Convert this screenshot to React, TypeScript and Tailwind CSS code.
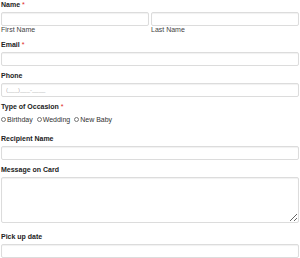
const inputCls =
  'block w-full h-[14px] border border-[#dcdcdc] rounded-[2px] bg-white shadow-[inset_0_1px_1px_rgba(0,0,0,0.06)] px-[4px] text-[6px] text-[#555] outline-none';

const Label = ({ text, required }: { text: string; required?: boolean }) => (
  <div className="text-[7px] leading-[9px] font-bold text-[#222] mb-[3px]">
    {text}
    {required && <span className="text-[#e02424] font-normal"> *</span>}
  </div>
);

const App = () => {
  return (
    <div
      className="w-[300px] h-[258px] bg-white px-[1px] overflow-hidden"
      style={{ fontFamily: '"Liberation Sans", Arial, sans-serif' }}
    >
      <div>
        <Label text="Name" required />
        <div className="flex gap-[2px]">
          <div className="flex-1">
            <input className={inputCls} />
            <div className="text-[7px] leading-[8px] text-[#444]">First Name</div>
          </div>
          <div className="flex-1">
            <input className={inputCls} />
            <div className="text-[7px] leading-[8px] text-[#444]">Last Name</div>
          </div>
        </div>
      </div>

      <div className="mt-[6px]">
        <Label text="Email" required />
        <input className={inputCls} />
      </div>

      <div className="mt-[5px]">
        <Label text="Phone" />
        <input className={inputCls} placeholder="(___)___-____" />
      </div>

      <div className="mt-[5px]">
        <Label text="Type of Occasion" required />
        <div className="mt-[4px] flex items-center gap-[4px] text-[7px] leading-[9px] text-[#333]">
          {['Birthday', 'Wedding', 'New Baby'].map((o) => (
            <label key={o} className="flex items-center gap-[1px]">
              <span className="inline-block w-[5px] h-[5px] rounded-full border border-[#777]" />
              {o}
            </label>
          ))}
        </div>
      </div>

      <div className="mt-[10px]">
        <Label text="Recipient Name" />
        <input className={inputCls} />
      </div>

      <div className="mt-[5px]">
        <Label text="Message on Card" />
        <textarea className={inputCls + ' h-[46px] resize-y'} />
      </div>

      <div className="mt-[9px]">
        <Label text="Pick up date" />
        <input className={inputCls} />
      </div>
    </div>
  );
};

export default App;
